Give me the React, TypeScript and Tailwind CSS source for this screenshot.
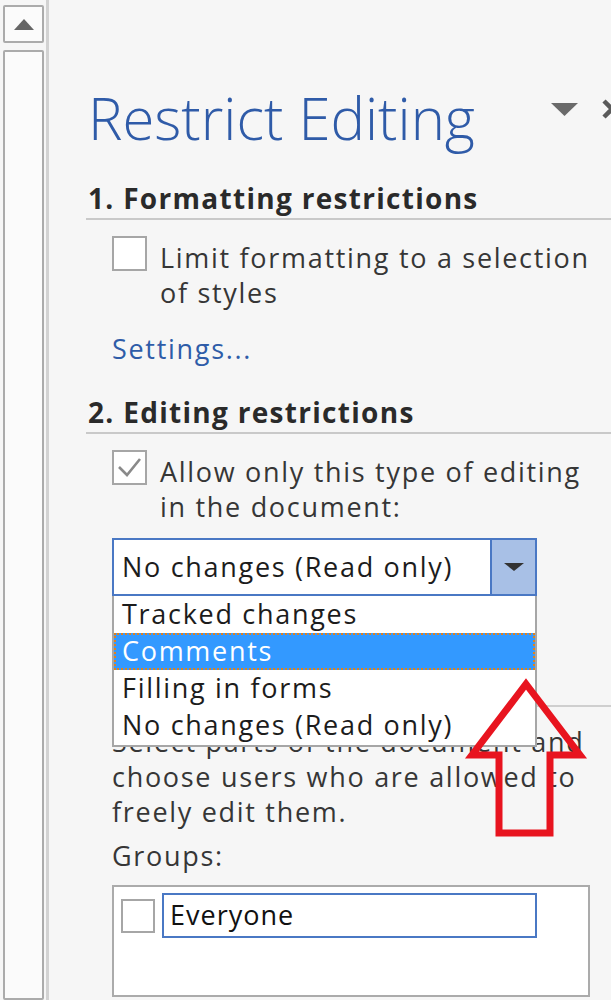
import React from 'react';

const CheckBox = ({ checked = false, size = 35 }: { checked?: boolean; size?: number }) => (
  <div
    className="relative shrink-0 border-2 border-[#a6a6a6] bg-white"
    style={{ width: size, height: size }}
  >
    {checked && (
      <svg className="absolute inset-0" width="31" height="31" viewBox="0 0 31 31">
        <path d="M5 15 L13 23 L26 7" fill="none" stroke="#8a8a8a" strokeWidth="2.6" />
      </svg>
    )}
  </div>
);

const options = ['Tracked changes', 'Comments', 'Filling in forms', 'No changes (Read only)'];

export default function App() {
  const selected = 'Comments';

  return (
    <div className="relative w-[611px] h-[1000px] overflow-hidden flex bg-[#f6f6f6] font-['Open_Sans',sans-serif] text-[#363636]">
      {/* scrollbar */}
      <div className="w-[46px] shrink-0 flex flex-col gap-[7px] pt-[5px] pl-[3px] pr-[2px]">
        <div className="h-[38px] border-2 border-[#ababab] rounded-[2px] bg-[#fbfbfb] flex items-center justify-center">
          <svg width="20" height="11" viewBox="0 0 20 11">
            <path d="M10 0 L20 11 L0 11 Z" fill="#666" />
          </svg>
        </div>
        <div className="flex-1 border-2 border-[#ababab] rounded-[2px] bg-[#fbfbfb]" />
      </div>
      <div className="w-[3px] shrink-0 bg-[#d2d2d2]" />

      {/* task pane */}
      <div className="flex-1 min-w-0 pl-[39px] flex flex-col whitespace-nowrap">
        <div className="mt-[85px] flex items-start">
          <h1 className="text-[58px] leading-[66px] font-light text-[#2f5ba8]">Restrict Editing</h1>
          <svg className="ml-auto mt-[18px] shrink-0" width="27" height="13" viewBox="0 0 27 13">
            <path d="M0 0 L27 0 L13.5 13 Z" fill="#6a6a6a" />
          </svg>
          <svg className="ml-[23px] -mr-[12px] mt-[13px] shrink-0" width="22" height="22" viewBox="0 0 22 22">
            <path d="M3 3 L19 19 M19 3 L3 19" stroke="#5a5a5a" strokeWidth="4.5" />
          </svg>
        </div>

        <h2 className="mt-[30px] -ml-[2px] pl-[2px] text-[28px] leading-[34px] tracking-[1.3px] font-bold text-[#2a2a2a] pb-[3px] border-b-2 border-[#c9c9c9]">
          1. Formatting restrictions
        </h2>

        <div className="mt-[16px] ml-[24px] flex gap-[13px]">
          <CheckBox />
          <p className="mt-[4px] text-[27px] leading-[35px] tracking-[1.7px]">
            Limit formatting to a selection
            <br />
            of styles
          </p>
        </div>

        <div className="mt-[21px] ml-[24px] text-[27px] leading-[35px] tracking-[1.7px] text-[#2e5ca8]">Settings...</div>

        <h2 className="mt-[29px] -ml-[2px] pl-[2px] text-[28px] leading-[34px] tracking-[1.3px] font-bold text-[#2a2a2a] pb-[3px] border-b-2 border-[#c9c9c9]">
          2. Editing restrictions
        </h2>

        <div className="mt-[16px] ml-[24px] flex gap-[13px]">
          <CheckBox checked />
          <p className="mt-[4px] text-[27px] leading-[35px] tracking-[1.7px]">
            Allow only this type of editing
            <br />
            in the document:
          </p>
        </div>

        {/* dropdown */}
        <div className="relative mt-[14px] ml-[24px] w-[425px]">
          <div className="h-[58px] border-2 border-[#4a78c4] bg-white flex">
            <div className="flex-1 pl-[8px] flex items-center text-[27px] tracking-[1.7px] text-[#1c1c1c]">
              No changes (Read only)
            </div>
            <div className="w-[45px] border-l-2 border-[#4a78c4] bg-[#a8c0e6] flex items-center justify-center">
              <svg width="20" height="8" viewBox="0 0 20 8">
                <path d="M0 0 L20 0 L10 8 Z" fill="#333" />
              </svg>
            </div>
          </div>
          <ul className="absolute left-0 top-[58px] z-10 w-[425px] border-2 border-t-0 border-[#a6a6a6] bg-white pb-[1px]">
            {options.map((o) =>
              o === selected ? (
                <li
                  key={o}
                  className="h-[37px] pl-[6px] flex items-center text-[27px] tracking-[1.7px] text-white bg-[#3399ff] border-2 border-dotted border-[#e0821e]"
                >
                  {o}
                </li>
              ) : (
                <li key={o} className="h-[37px] pl-[8px] flex items-center text-[27px] tracking-[1.7px] text-[#1c1c1c]">
                  {o}
                </li>
              )
            )}
          </ul>
        </div>

        <div className="mt-[109px] ml-[449px] h-[2px] bg-[#cfcfcf]" />

        <p className="mt-[17px] ml-[24px] text-[27px] leading-[35px] tracking-[1.7px]">
          Select parts of the document and
          <br />
          choose users who are allowed to
          <br />
          freely edit them.
        </p>

        <div className="mt-[9px] ml-[24px] text-[27px] leading-[35px] tracking-[1.7px]">Groups:</div>

        <div className="mt-[12px] ml-[24px] w-[478px] h-[112px] border-2 border-[#ababab] bg-white">
          <div className="pt-[6px] pl-[7px] flex items-center gap-[7px]">
            <CheckBox size={34} />
            <div className="w-[375px] h-[45px] border-2 border-[#4a78c4] pl-[6px] flex items-center text-[27px] tracking-[1px] text-[#111]">
              Everyone
            </div>
          </div>
        </div>
      </div>

      {/* annotation arrow */}
      <svg className="absolute inset-0 pointer-events-none z-20" width="611" height="1000" viewBox="0 0 611 1000">
        <polygon
          points="526,684 580,755 550,755 550,833 499,833 499,755 472,755"
          fill="none"
          stroke="#e8141f"
          strokeWidth="7"
          strokeLinejoin="miter"
        />
      </svg>
    </div>
  );
}
